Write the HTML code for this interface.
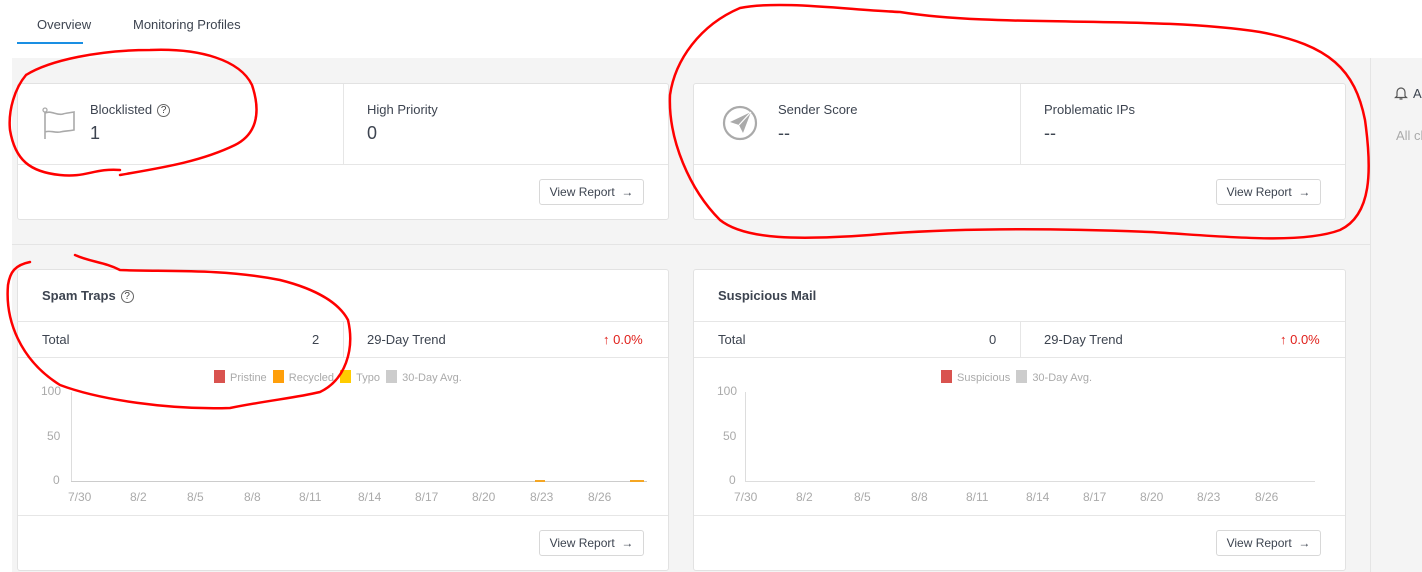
<!DOCTYPE html>
<html><head><meta charset="utf-8"><style>
*{box-sizing:border-box;margin:0;padding:0}
body{width:1422px;height:572px;overflow:hidden;background:#fff;font-family:"Liberation Sans",sans-serif;color:#3d4450;position:relative}
.a{position:absolute;white-space:nowrap}
.card{position:absolute;background:#fff;border:1px solid #e2e2e2;border-radius:3px}
.hl{position:absolute;height:1px;background:#e6e6e6}
.vl{position:absolute;width:1px;background:#e6e6e6}
.btn{position:absolute;width:105px;height:26px;border:1px solid #d8d8d8;border-radius:3px;font-size:12px;color:#3d4450;line-height:24px;text-align:center;background:#fff}
.lbl{font-size:13px;color:#3d4450}
.big{font-size:18px;color:#3d4450}
.q{display:inline-block;width:13px;height:13px;border:1px solid #666;border-radius:50%;font-size:10px;line-height:11px;text-align:center;vertical-align:1px;margin-left:5px;color:#444}
.ax{font-size:12px;color:#aaa;position:absolute;white-space:nowrap}
.leg{font-size:11px;color:#aaa;position:absolute;white-space:nowrap}
.sw{display:inline-block;width:11px;height:13px;vertical-align:-2px;margin-right:5px}
</style></head><body>
<div class="a lbl" style="left:37px;top:17px">Overview</div>
<div class="a lbl" style="left:133px;top:17px">Monitoring Profiles</div>
<div class="a" style="left:17px;top:42px;width:66px;height:2px;background:#1a8fe3"></div>
<div class="a" style="left:12px;top:58px;width:1410px;height:514px;background:#f4f4f4"></div>
<div class="a" style="left:1370px;top:58px;width:1px;height:514px;background:#e4e4e4"></div>
<div class="hl" style="left:12px;top:244px;width:1358px;background:#e4e4e4"></div>
<svg class="a" style="left:1394px;top:85px" width="14" height="16" viewBox="0 0 14 16"><path d="M3 11V7a4 4 0 0 1 8 0v4l1.5 1.5h-11z M5.5 14h3" fill="none" stroke="#555" stroke-width="1.2"/></svg>
<div class="a lbl" style="left:1413px;top:86px">A</div>
<div class="a" style="left:1396px;top:128px;font-size:13px;color:#aaa">All cl</div>

<!-- card1 -->
<div class="card" style="left:17px;top:83px;width:652px;height:137px">
<div class="hl" style="left:0;top:80px;width:650px"></div>
<div class="vl" style="left:325px;top:0;height:80px"></div>
<svg class="a" style="left:23px;top:23px" width="34" height="34" viewBox="0 0 34 34"><circle cx="4" cy="3" r="2" fill="none" stroke="#aaa" stroke-width="1.3"/><path d="M4 5v27 M4 6c6-3 12 3 18 1 3-1 6-1 11 -2v18c-6 1-10 1-14 2-6 1-10-2-15 0" fill="none" stroke="#aaa" stroke-width="1.6"/></svg>
<div class="a lbl" style="left:72px;top:18px">Blocklisted<span class="q">?</span></div>
<div class="a big" style="left:72px;top:39px">1</div>
<div class="a lbl" style="left:349px;top:18px">High Priority</div>
<div class="a big" style="left:349px;top:39px">0</div>
<div class="btn" style="left:521px;top:95px">View Report &nbsp;→</div>
</div>
<!-- card2 -->
<div class="card" style="left:693px;top:83px;width:653px;height:137px">
<div class="hl" style="left:0;top:80px;width:651px"></div>
<div class="vl" style="left:326px;top:0;height:80px"></div>
<svg class="a" style="left:28px;top:21px" width="36" height="36" viewBox="0 0 36 36"><circle cx="18" cy="18" r="16" fill="none" stroke="#aaa" stroke-width="2.2"/><path d="M8 17L29 7 21 28 17 20z" fill="#aaa"/><path d="M17 20L29 7" stroke="#fff" stroke-width="1.2"/></svg>
<div class="a lbl" style="left:84px;top:18px">Sender Score</div>
<div class="a big" style="left:84px;top:39px">--</div>
<div class="a lbl" style="left:350px;top:18px">Problematic IPs</div>
<div class="a big" style="left:350px;top:39px">--</div>
<div class="btn" style="left:522px;top:95px">View Report &nbsp;→</div>
</div>

<!-- card3 -->
<div class="card" style="left:17px;top:269px;width:652px;height:302px">
<div class="a" style="left:24px;top:18px;font-size:13px;font-weight:bold;color:#3d4450">Spam Traps<span class="q" style="font-weight:normal">?</span></div>
<div class="hl" style="left:0;top:51px;width:650px"></div>
<div class="vl" style="left:325px;top:51px;height:36px"></div>
<div class="a lbl" style="left:24px;top:62px">Total</div>
<div class="a lbl" style="left:294px;top:62px">2</div>
<div class="a lbl" style="left:349px;top:62px">29-Day Trend</div>
<div class="a" style="left:585px;top:62px;font-size:13px;color:#e0201b">↑ 0.0%</div>
<div class="hl" style="left:0;top:87px;width:650px"></div>
<div class="leg" style="left:196px;top:100px"><span class="sw" style="background:#d9534f"></span>Pristine &nbsp;<span class="sw" style="background:#ff9f0a"></span>Recycled &nbsp;<span class="sw" style="background:#ffcc00"></span>Typo &nbsp;<span class="sw" style="background:#ccc"></span>30-Day Avg.</div>
<div class="ax" style="left:23px;top:114px">100</div>
<div class="ax" style="left:29px;top:159px">50</div>
<div class="ax" style="left:35px;top:203px">0</div>
<div class="vl" style="left:53px;top:122px;height:90px;background:#ddd"></div>
<div class="hl" style="left:53px;top:211px;width:576px;background:#ccc"></div>
<div class="a" style="left:517px;top:210px;width:10px;height:2px;background:#f5a623"></div>
<div class="a" style="left:612px;top:210px;width:14px;height:2px;background:#f5a623"></div>
<div class="ax" style="left:50px;top:220px">7/30</div><div class="ax" style="left:112px;top:220px">8/2</div><div class="ax" style="left:169px;top:220px">8/5</div><div class="ax" style="left:226px;top:220px">8/8</div><div class="ax" style="left:281px;top:220px">8/11</div><div class="ax" style="left:340px;top:220px">8/14</div><div class="ax" style="left:397px;top:220px">8/17</div><div class="ax" style="left:454px;top:220px">8/20</div><div class="ax" style="left:512px;top:220px">8/23</div><div class="ax" style="left:570px;top:220px">8/26</div>
<div class="hl" style="left:0;top:245px;width:650px"></div>
<div class="btn" style="left:521px;top:260px">View Report &nbsp;→</div>
</div>

<!-- card4 -->
<div class="card" style="left:693px;top:269px;width:653px;height:302px">
<div class="a" style="left:24px;top:18px;font-size:13px;font-weight:bold;color:#3d4450">Suspicious Mail</div>
<div class="hl" style="left:0;top:51px;width:651px"></div>
<div class="vl" style="left:326px;top:51px;height:36px"></div>
<div class="a lbl" style="left:24px;top:62px">Total</div>
<div class="a lbl" style="left:295px;top:62px">0</div>
<div class="a lbl" style="left:350px;top:62px">29-Day Trend</div>
<div class="a" style="left:586px;top:62px;font-size:13px;color:#e0201b">↑ 0.0%</div>
<div class="hl" style="left:0;top:87px;width:651px"></div>
<div class="leg" style="left:247px;top:100px"><span class="sw" style="background:#d9534f"></span>Suspicious &nbsp;<span class="sw" style="background:#ccc"></span>30-Day Avg.</div>
<div class="ax" style="left:23px;top:114px">100</div>
<div class="ax" style="left:29px;top:159px">50</div>
<div class="ax" style="left:35px;top:203px">0</div>
<div class="vl" style="left:51px;top:122px;height:90px;background:#ddd"></div>
<div class="hl" style="left:51px;top:211px;width:570px;background:#ddd"></div>
<div class="ax" style="left:40px;top:220px">7/30</div><div class="ax" style="left:102px;top:220px">8/2</div><div class="ax" style="left:160px;top:220px">8/5</div><div class="ax" style="left:217px;top:220px">8/8</div><div class="ax" style="left:272px;top:220px">8/11</div><div class="ax" style="left:332px;top:220px">8/14</div><div class="ax" style="left:389px;top:220px">8/17</div><div class="ax" style="left:446px;top:220px">8/20</div><div class="ax" style="left:503px;top:220px">8/23</div><div class="ax" style="left:561px;top:220px">8/26</div>
<div class="hl" style="left:0;top:245px;width:651px"></div>
<div class="btn" style="left:522px;top:260px">View Report &nbsp;→</div>
</div>

<svg class="a" style="left:0;top:0" width="1422" height="572" viewBox="0 0 1422 572" fill="none" stroke="#f00" stroke-width="2.5" stroke-linecap="round">
<path d="M26 75C50 60 100 50 150 50C200 48 240 60 252 85C262 115 255 135 235 145C200 162 160 168 120 175 M120 170C95 168 85 178 60 175C30 172 15 160 10 130C8 110 15 88 26 75"/>
<path d="M740 8C700 25 675 60 670 95C668 140 690 190 720 220C745 240 800 240 870 235C950 228 1050 228 1150 232C1220 236 1300 245 1340 230C1372 215 1372 170 1365 120C1355 70 1330 45 1260 32C1150 15 1000 28 900 12C850 10 780 0 740 8"/>
<path d="M75 255C90 262 105 262 120 270C160 272 220 268 280 280C320 290 340 305 348 320C355 350 345 380 320 392C295 398 270 400 230 408C170 410 100 400 60 385C20 360 5 320 8 285C10 272 15 265 30 262"/>
</svg>
</body></html>
